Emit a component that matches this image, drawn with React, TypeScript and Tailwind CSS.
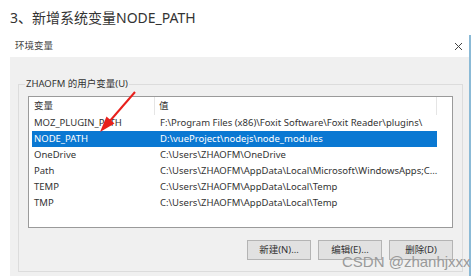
import React from "react";

const cjk = '"Noto Sans", "Noto Sans CJK SC", sans-serif';

const rows = [
  ["MOZ_PLUGIN_PATH", "F:\\Program Files (x86)\\Foxit Software\\Foxit Reader\\plugins\\"],
  ["NODE_PATH", "D:\\vueProject\\nodejs\\node_modules"],
  ["OneDrive", "C:\\Users\\ZHAOFM\\OneDrive"],
  ["Path", "C:\\Users\\ZHAOFM\\AppData\\Local\\Microsoft\\WindowsApps;C..."],
  ["TEMP", "C:\\Users\\ZHAOFM\\AppData\\Local\\Temp"],
  ["TMP", "C:\\Users\\ZHAOFM\\AppData\\Local\\Temp"],
];

export default function App() {
  return (
    <div
      className="relative w-[474px] h-[278px] bg-white overflow-hidden text-[#333]"
      style={{ fontFamily: cjk }}
    >
      <div className="h-[35px] pl-[10px] flex items-center text-[14px] text-[#333]">
        3、新增系统变量NODE_PATH
      </div>
      <div className="ml-[10px] w-[461px] h-[241px] flex flex-col border-r-[2px] border-[#8bbad6]">
        <div className="h-[22px] bg-white flex items-center justify-between pl-[5px] pr-[6px]">
          <span className="text-[9.5px] text-[#444]">环境变量</span>
          <svg width="9" height="9" viewBox="0 0 9 9">
            <path d="M1 1L8 8M8 1L1 8" stroke="#444" strokeWidth="1" />
          </svg>
        </div>
        <div className="flex-1 bg-[#f0f0f0] pt-[27px] pl-[8px] pr-[6px] pb-[4px] flex">
          <div className="relative flex-1 border border-[#dcdcdc] px-[9px] pt-[11px] flex flex-col">
            <span className="absolute left-[6px] top-[-8px] bg-[#f0f0f0] px-[1px] text-[9.5px] leading-[14px] text-[#333]">
              ZHAOFM 的用户变量(U)
            </span>
            <div className="h-[132px] bg-white border border-[#9a9a9a] flex flex-col text-[9.5px] text-[#333] overflow-hidden">
              <div className="h-[18px] flex items-center shrink-0">
                <div className="w-[126px] shrink-0 h-full pl-[5px] flex items-center border-r border-[#e5e5e5]">变量</div>
                <div className="w-[282px] shrink-0 h-full pl-[4px] flex items-center border-r border-[#e5e5e5]">值</div>
              </div>
              {rows.map(([k, v], i) => (
                <div
                  key={k}
                  className={
                    "h-[16px] shrink-0 flex items-center ml-[3px] w-[405px] " +
                    (i === 1 ? "bg-[#0a78d2] text-white" : "")
                  }
                >
                  <div className="w-[124px] shrink-0 pl-[2px] whitespace-nowrap">{k}</div>
                  <div className="shrink-0 pl-[4px] whitespace-nowrap">{v}</div>
                </div>
              ))}
            </div>
            <div className="flex justify-end gap-[7px] mt-[12px]">
              {["新建(N)...", "编辑(E)...", "删除(D)"].map((t) => (
                <div
                  key={t}
                  className="w-[64px] h-[20px] bg-[#e1e1e1] border border-[#b4b4b4] flex items-center justify-center text-[9.5px] text-[#333]"
                >
                  {t}
                </div>
              ))}
            </div>
          </div>
        </div>
      </div>
      <svg
        className="absolute left-0 top-0"
        width="474"
        height="278"
        viewBox="0 0 474 278"
      >
        <line x1="135" y1="92" x2="109" y2="122" stroke="#e8201c" strokeWidth="2" />
        <polygon points="100,132 106.5,116.5 114.5,123.5" fill="#e8201c" />
      </svg>
      <div
        className="absolute left-[342px] top-[253px] text-[15px] leading-[18px] text-[#9a9a9a]"
        style={{ fontFamily: '"Liberation Sans", Arial, sans-serif' }}
      >
        CSDN @zhanhjxxx
      </div>
    </div>
  );
}
